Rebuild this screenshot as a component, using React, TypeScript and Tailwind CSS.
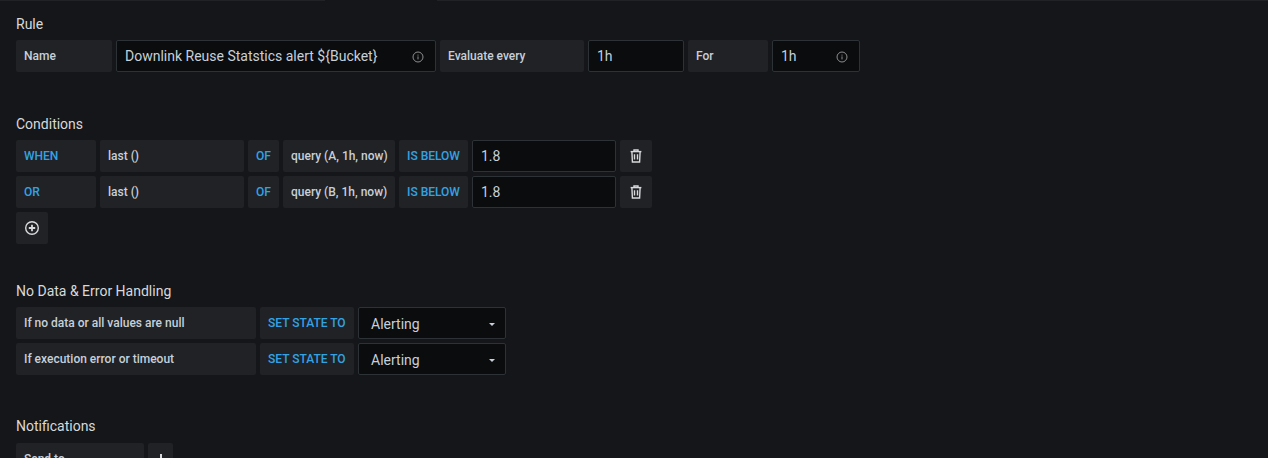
import { ReactNode } from "react";

// Small circled "i" used inside the inputs
function InfoIcon() {
  return (
    <svg width="12" height="12" viewBox="0 0 12 12" fill="none" className="mt-px text-[#8e8e8e]">
      <circle cx="6" cy="6" r="5" stroke="currentColor" strokeWidth="1" />
      <rect x="5.5" y="5.4" width="1" height="3" fill="currentColor" />
      <rect x="5.5" y="3.6" width="1" height="1" fill="currentColor" />
    </svg>
  );
}

function TrashIcon() {
  return (
    <svg width="16" height="16" viewBox="0 0 16 16" fill="none" stroke="#d8d9da" strokeWidth="1.4">
      <path d="M2.6 3.6h10.8" />
      <path d="M6 3.4V2h4v1.4" />
      <path d="M3.9 3.8l.5 10.2h7.2l.5-10.2" />
      <path d="M6.5 6.2v5.4M9.5 6.2v5.4" />
    </svg>
  );
}

function PlusCircle() {
  return (
    <svg width="16" height="16" viewBox="0 0 16 16" fill="none" stroke="#d8d9da" strokeWidth="1.4">
      <circle cx="8" cy="8" r="6.3" />
      <path d="M8 4.8v6.4M4.8 8h6.4" strokeWidth="1.8" />
    </svg>
  );
}

function Label({ className, children }: { className: string; children: ReactNode }) {
  return (
    <div className={`h-8 shrink-0 flex items-center px-2 rounded-[2px] bg-[#202226] text-xs font-medium whitespace-nowrap text-[#c7d0d9] ${className}`}>
      {children}
    </div>
  );
}

function Keyword({ className, children }: { className: string; children: ReactNode }) {
  return (
    <div className={`h-8 shrink-0 flex items-center px-2 rounded-[2px] bg-[#202226] text-xs font-medium whitespace-nowrap text-[#33a2e5] ${className}`}>
      {children}
    </div>
  );
}

function Input({ className, value, info }: { className: string; value: string; info?: boolean }) {
  return (
    <div className={`h-8 shrink-0 flex items-center justify-between pl-2 pr-[11px] rounded-[2px] border border-[#2c3235] bg-[#0b0c0e] text-sm text-[#c7d0d9] ${className}`}>
      <span>{value}</span>
      {info && <InfoIcon />}
    </div>
  );
}

function AlertSelect() {
  return (
    <div className="h-8 w-[148px] shrink-0 flex items-center justify-between pl-3 pr-[10px] rounded-[2px] border border-[#2c3235] bg-[#0b0c0e] text-sm text-[#c7d0d9]">
      <span className="mt-px">Alerting</span>
      <span className="mt-[3px] w-0 h-0 border-x-[3.5px] border-x-transparent border-t-[3.5px] border-t-[#c7d0d9]" />
    </div>
  );
}

function IconButton({ children }: { children: ReactNode }) {
  return (
    <div className="h-8 w-8 shrink-0 flex items-center justify-center rounded-[2px] bg-[#202226]">{children}</div>
  );
}

function Heading({ className, children }: { className?: string; children: ReactNode }) {
  return <h5 className={`h-4 leading-4 text-sm text-[#d8d9da] ${className ?? ""}`}>{children}</h5>;
}

function ConditionRow({ op, query }: { op: string; query: string }) {
  return (
    <div className="flex gap-1">
      <Keyword className="w-20">{op}</Keyword>
      <Label className="w-36">last ()</Label>
      <Keyword className="w-[31px]">OF</Keyword>
      <Label className="w-28">{query}</Label>
      <Keyword className="w-[69px]">IS BELOW</Keyword>
      <Input className="w-36" value="1.8" />
      <IconButton>
        <TrashIcon />
      </IconButton>
    </div>
  );
}

export default function App() {
  return (
    <div className="h-[458px] overflow-hidden bg-[#141619] font-['Roboto',sans-serif]">
      {/* tab strip edge at the very top */}
      <div className="flex h-px">
        <div className="w-[325px] bg-[#202226]" />
        <div className="w-28" />
        <div className="flex-1 bg-[#202226]" />
      </div>

      <div className="px-4 pt-[15px]">
        <Heading className="mb-2">Rule</Heading>
        <div className="flex gap-1">
          <Label className="w-24">Name</Label>
          <Input className="w-80" value="Downlink Reuse Statstics alert ${Bucket}" info />
          <Label className="w-36">Evaluate every</Label>
          <Input className="w-24" value="1h" />
          <Label className="w-20">For</Label>
          <Input className="w-[88px]" value="1h" info />
        </div>

        <Heading className="mt-11 mb-2">Conditions</Heading>
        <div className="flex flex-col gap-1">
          <ConditionRow op="WHEN" query="query (A, 1h, now)" />
          <ConditionRow op="OR" query="query (B, 1h, now)" />
          <IconButton>
            <PlusCircle />
          </IconButton>
        </div>

        <Heading className="mt-[39px] mb-2">No Data &amp; Error Handling</Heading>
        <div className="flex flex-col gap-1">
          <div className="flex gap-1">
            <Label className="w-60">If no data or all values are null</Label>
            <Keyword className="w-[94px]">SET STATE TO</Keyword>
            <AlertSelect />
          </div>
          <div className="flex gap-1">
            <Label className="w-60">If execution error or timeout</Label>
            <Keyword className="w-[94px]">SET STATE TO</Keyword>
            <AlertSelect />
          </div>
        </div>

        <Heading className="mt-[43px] mb-[9px]">Notifications</Heading>
        <div className="flex gap-1">
          <Label className="w-32">Send to</Label>
          <div className="h-8 w-[25px] shrink-0 flex items-center justify-center rounded-[2px] bg-[#202226]">
            <svg width="12" height="12" viewBox="0 0 12 12" stroke="#d8d9da" strokeWidth="2">
              <path d="M6 1v10M1 6h10" />
            </svg>
          </div>
        </div>
      </div>
    </div>
  );
}
